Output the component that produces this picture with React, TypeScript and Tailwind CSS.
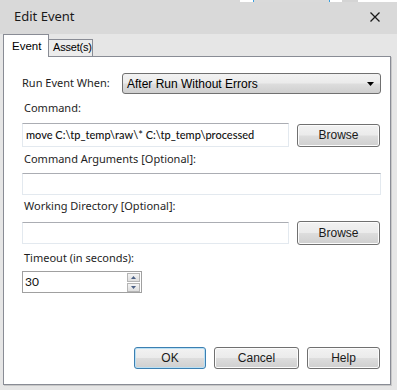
import React from 'react';

const uiFont = { fontFamily: '"Noto Sans", "Open Sans", sans-serif' };
const classicFont = { fontFamily: '"Liberation Sans", Arial, sans-serif' };
const editFont = { fontFamily: 'Lato, "Noto Sans", sans-serif' };

// Classic Win7-ish push button
const PushButton: React.FC<{ label: string; width: string; focused?: boolean; height?: string }> = ({
  label,
  width,
  focused = false,
  height = 'h-[22px]',
}) => (
  <button
    className={
      `${width} ${height} rounded-[3px] border text-[12px] text-[#1a1a1a] bg-[linear-gradient(#f2f2f2_0%,#ebebeb_48%,#dddddd_52%,#cfcfcf_100%)] ` +
      (focused ? 'border-[#3c7fb1] shadow-[inset_0_0_0_1px_#b9e0f5]' : 'border-[#707070] shadow-[inset_0_0_0_1px_#fcfcfc]')
    }
    style={classicFont}
  >
    {label}
  </button>
);

const Label: React.FC<{ children: React.ReactNode; className?: string }> = ({ children, className = '' }) => (
  <div className={`h-[16px] leading-[16px] text-[11px] text-[#1e1e1e] pl-[2px] ${className}`} style={uiFont}>
    {children}
  </div>
);

export default function App() {
  return (
    <div className="w-[399px] h-[390px] bg-white overflow-hidden">
      <div className="relative w-[397px] h-[390px] bg-[#e6e6e6] flex flex-col">
        {/* bits of the window behind, peeking over the top */}
        <div className="absolute top-0 left-[240px] w-[159px] h-[2px] bg-white flex">
          <div className="ml-[13px] w-[77px] h-[2px] bg-[#dadada] border-x border-[#3aa0e0]" />
          <div className="ml-[12px] w-[16px] h-[2px] bg-[#d4d4d4]" />
        </div>

        {/* Title bar */}
        <div className="h-[34px] shrink-0 bg-[#d9d9d9] flex items-center justify-between pl-[14px] pr-[17px]">
          <span className="text-[13px] text-[#1a1a1a]" style={uiFont}>Edit Event</span>
          <svg width="10" height="10" viewBox="0 0 10 10">
            <path d="M0.5 0.5 L9.5 9.5 M9.5 0.5 L0.5 9.5" stroke="#1a1a1a" strokeWidth="1.3" />
          </svg>
        </div>

        {/* Tabs */}
        <div className="h-[22px] shrink-0 flex items-end pl-[3px] relative z-10">
          <div
            className="w-[46px] h-[23px] -mb-[1px] bg-white border border-b-0 border-[#898c95] pl-[8px] pt-[3px] text-[11.5px] text-black"
            style={classicFont}
          >
            Event
          </div>
          <div
            className="w-[45px] h-[17px] -ml-[1px] bg-[#ececec] border border-b-0 border-[#898c95] pl-[4px] leading-[15px] text-[11px] text-black tracking-[-0.2px]"
            style={classicFont}
          >
            Asset(s)
          </div>
        </div>

        {/* Panel */}
        <div className="ml-[3px] w-[388px] h-[329px] shrink-0 bg-white border border-[#898c95] shadow-[1px_1px_0_#c8c8c8] flex flex-col pl-[18px] pr-[9px] pb-[15px]">
          {/* Run Event When */}
          <div className="mt-[16px] flex items-center h-[21px]">
            <div className="w-[100px] text-[11px] text-[#1e1e1e]" style={uiFont}>Run Event When:</div>
            <div
              className="flex-1 h-[21px] rounded-[3px] border border-[#707070] bg-[linear-gradient(#f2f2f2_0%,#ebebeb_48%,#dddddd_52%,#cfcfcf_100%)] flex items-center justify-between pl-[4px] pr-[6px] text-[12px] text-black"
              style={classicFont}
            >
              <span>After Run Without Errors</span>
              <svg width="7" height="4" viewBox="0 0 7 4">
                <path d="M0 0 H7 L3.5 4 Z" fill="#000" />
              </svg>
            </div>
          </div>

          <Label className="mt-[6px]">Command:</Label>
          <div className="mt-[7px] flex items-center gap-[8px]">
            <div
              className="w-[267px] h-[24px] border border-[#abadb3] border-x-[#e3e9ef] border-b-[#e3e9ef] flex items-center pl-[3px] text-[11px] font-medium text-[#111]"
              style={editFont}
            >
              move C:\tp_temp\raw\* C:\tp_temp\processed
            </div>
            <PushButton label="Browse" width="w-[83px]" height="h-[23px]" />
          </div>

          <Label className="mt-[4px]">Command Arguments [Optional]:</Label>
          <div className="mt-[6px] h-[22px] border border-[#abadb3] border-x-[#e3e9ef] border-b-[#e3e9ef]" />

          <Label className="mt-[3px]">Working Directory [Optional]:</Label>
          <div className="mt-[7px] flex items-center gap-[8px] h-[24px]">
            <div className="w-[267px] h-[22px] border border-[#abadb3] border-x-[#e3e9ef] border-b-[#e3e9ef]" />
            <PushButton label="Browse" width="w-[83px]" height="h-[24px]" />
          </div>

          <Label className="mt-[5px]">Timeout (in seconds):</Label>
          <div className="mt-[5px] w-[120px] h-[22px] border border-[#a0a0a0] flex items-center justify-between pl-[2px] pr-[1px]">
            <span className="text-[12px] text-[#111]" style={editFont}>30</span>
            <div className="flex flex-col gap-[1px]">
              <div className="w-[13px] h-[9px] border border-[#b5b5b5] bg-[linear-gradient(#f4f4f4,#dedede)] flex items-center justify-center">
                <svg width="5" height="3" viewBox="0 0 5 3"><path d="M0 3 L2.5 0 L5 3 Z" fill="#4d6185" /></svg>
              </div>
              <div className="w-[13px] h-[9px] border border-[#b5b5b5] bg-[linear-gradient(#f4f4f4,#dedede)] flex items-center justify-center">
                <svg width="5" height="3" viewBox="0 0 5 3"><path d="M0 0 L5 0 L2.5 3 Z" fill="#4d6185" /></svg>
              </div>
            </div>
          </div>

          <div className="mt-auto flex justify-end gap-[8px] pr-[1px]">
            <PushButton label="OK" width="w-[72px]" focused />
            <PushButton label="Cancel" width="w-[85px]" />
            <PushButton label="Help" width="w-[73px]" />
          </div>
        </div>
      </div>
    </div>
  );
}
